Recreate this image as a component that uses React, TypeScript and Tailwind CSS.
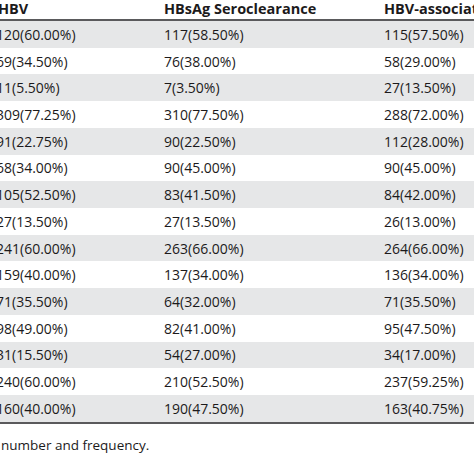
const ROWS: [string, string, string][] = [
  ["120(60.00%)", "117(58.50%)", "115(57.50%)"],
  ["69(34.50%)", "76(38.00%)", "58(29.00%)"],
  ["11(5.50%)", "7(3.50%)", "27(13.50%)"],
  ["309(77.25%)", "310(77.50%)", "288(72.00%)"],
  ["91(22.75%)", "90(22.50%)", "112(28.00%)"],
  ["68(34.00%)", "90(45.00%)", "90(45.00%)"],
  ["105(52.50%)", "83(41.50%)", "84(42.00%)"],
  ["27(13.50%)", "27(13.50%)", "26(13.00%)"],
  ["241(60.00%)", "263(66.00%)", "264(66.00%)"],
  ["159(40.00%)", "137(34.00%)", "136(34.00%)"],
  ["71(35.50%)", "64(32.00%)", "71(35.50%)"],
  ["98(49.00%)", "82(41.00%)", "95(47.50%)"],
  ["31(15.50%)", "54(27.00%)", "34(17.00%)"],
  ["240(60.00%)", "210(52.50%)", "237(59.25%)"],
  ["160(40.00%)", "190(47.50%)", "163(40.75%)"],
];

export default function App() {
  return (
    <div
      className="w-[474px] h-[474px] overflow-hidden bg-white text-[#1c1a1b]"
      style={{ fontFamily: '"Open Sans", "Liberation Sans", sans-serif' }}
    >
      <div className="-ml-[4px] w-[478px]">
        {/* header */}
        <div className="grid grid-cols-[168px_220px_1fr] h-[23px] items-start -mt-[2px] text-[14.5px] font-bold whitespace-nowrap border-b-2 border-[#5a5a5c]">
          <div className="pl-[2px]">HBV</div>
          <div>HBsAg Seroclearance</div>
          <div>HBV-associated</div>
        </div>

        {ROWS.map((r, i) => (
          <div
            key={i}
            className={
              "grid grid-cols-[168px_220px_1fr] h-[26.73px] items-center text-[14px] whitespace-nowrap " +
              (i % 2 === 0 ? "bg-[#e6e7e8]" : "bg-white")
            }
          >
            <div>{r[0]}</div>
            <div>{r[1]}</div>
            <div>{r[2]}</div>
          </div>
        ))}
        <div className="h-[2px] bg-[#5a5a5c]" />
      </div>

      <p className="mt-[15px] pl-[1px] text-[13.5px] leading-none whitespace-nowrap">
        number and frequency.
      </p>
    </div>
  );
}
